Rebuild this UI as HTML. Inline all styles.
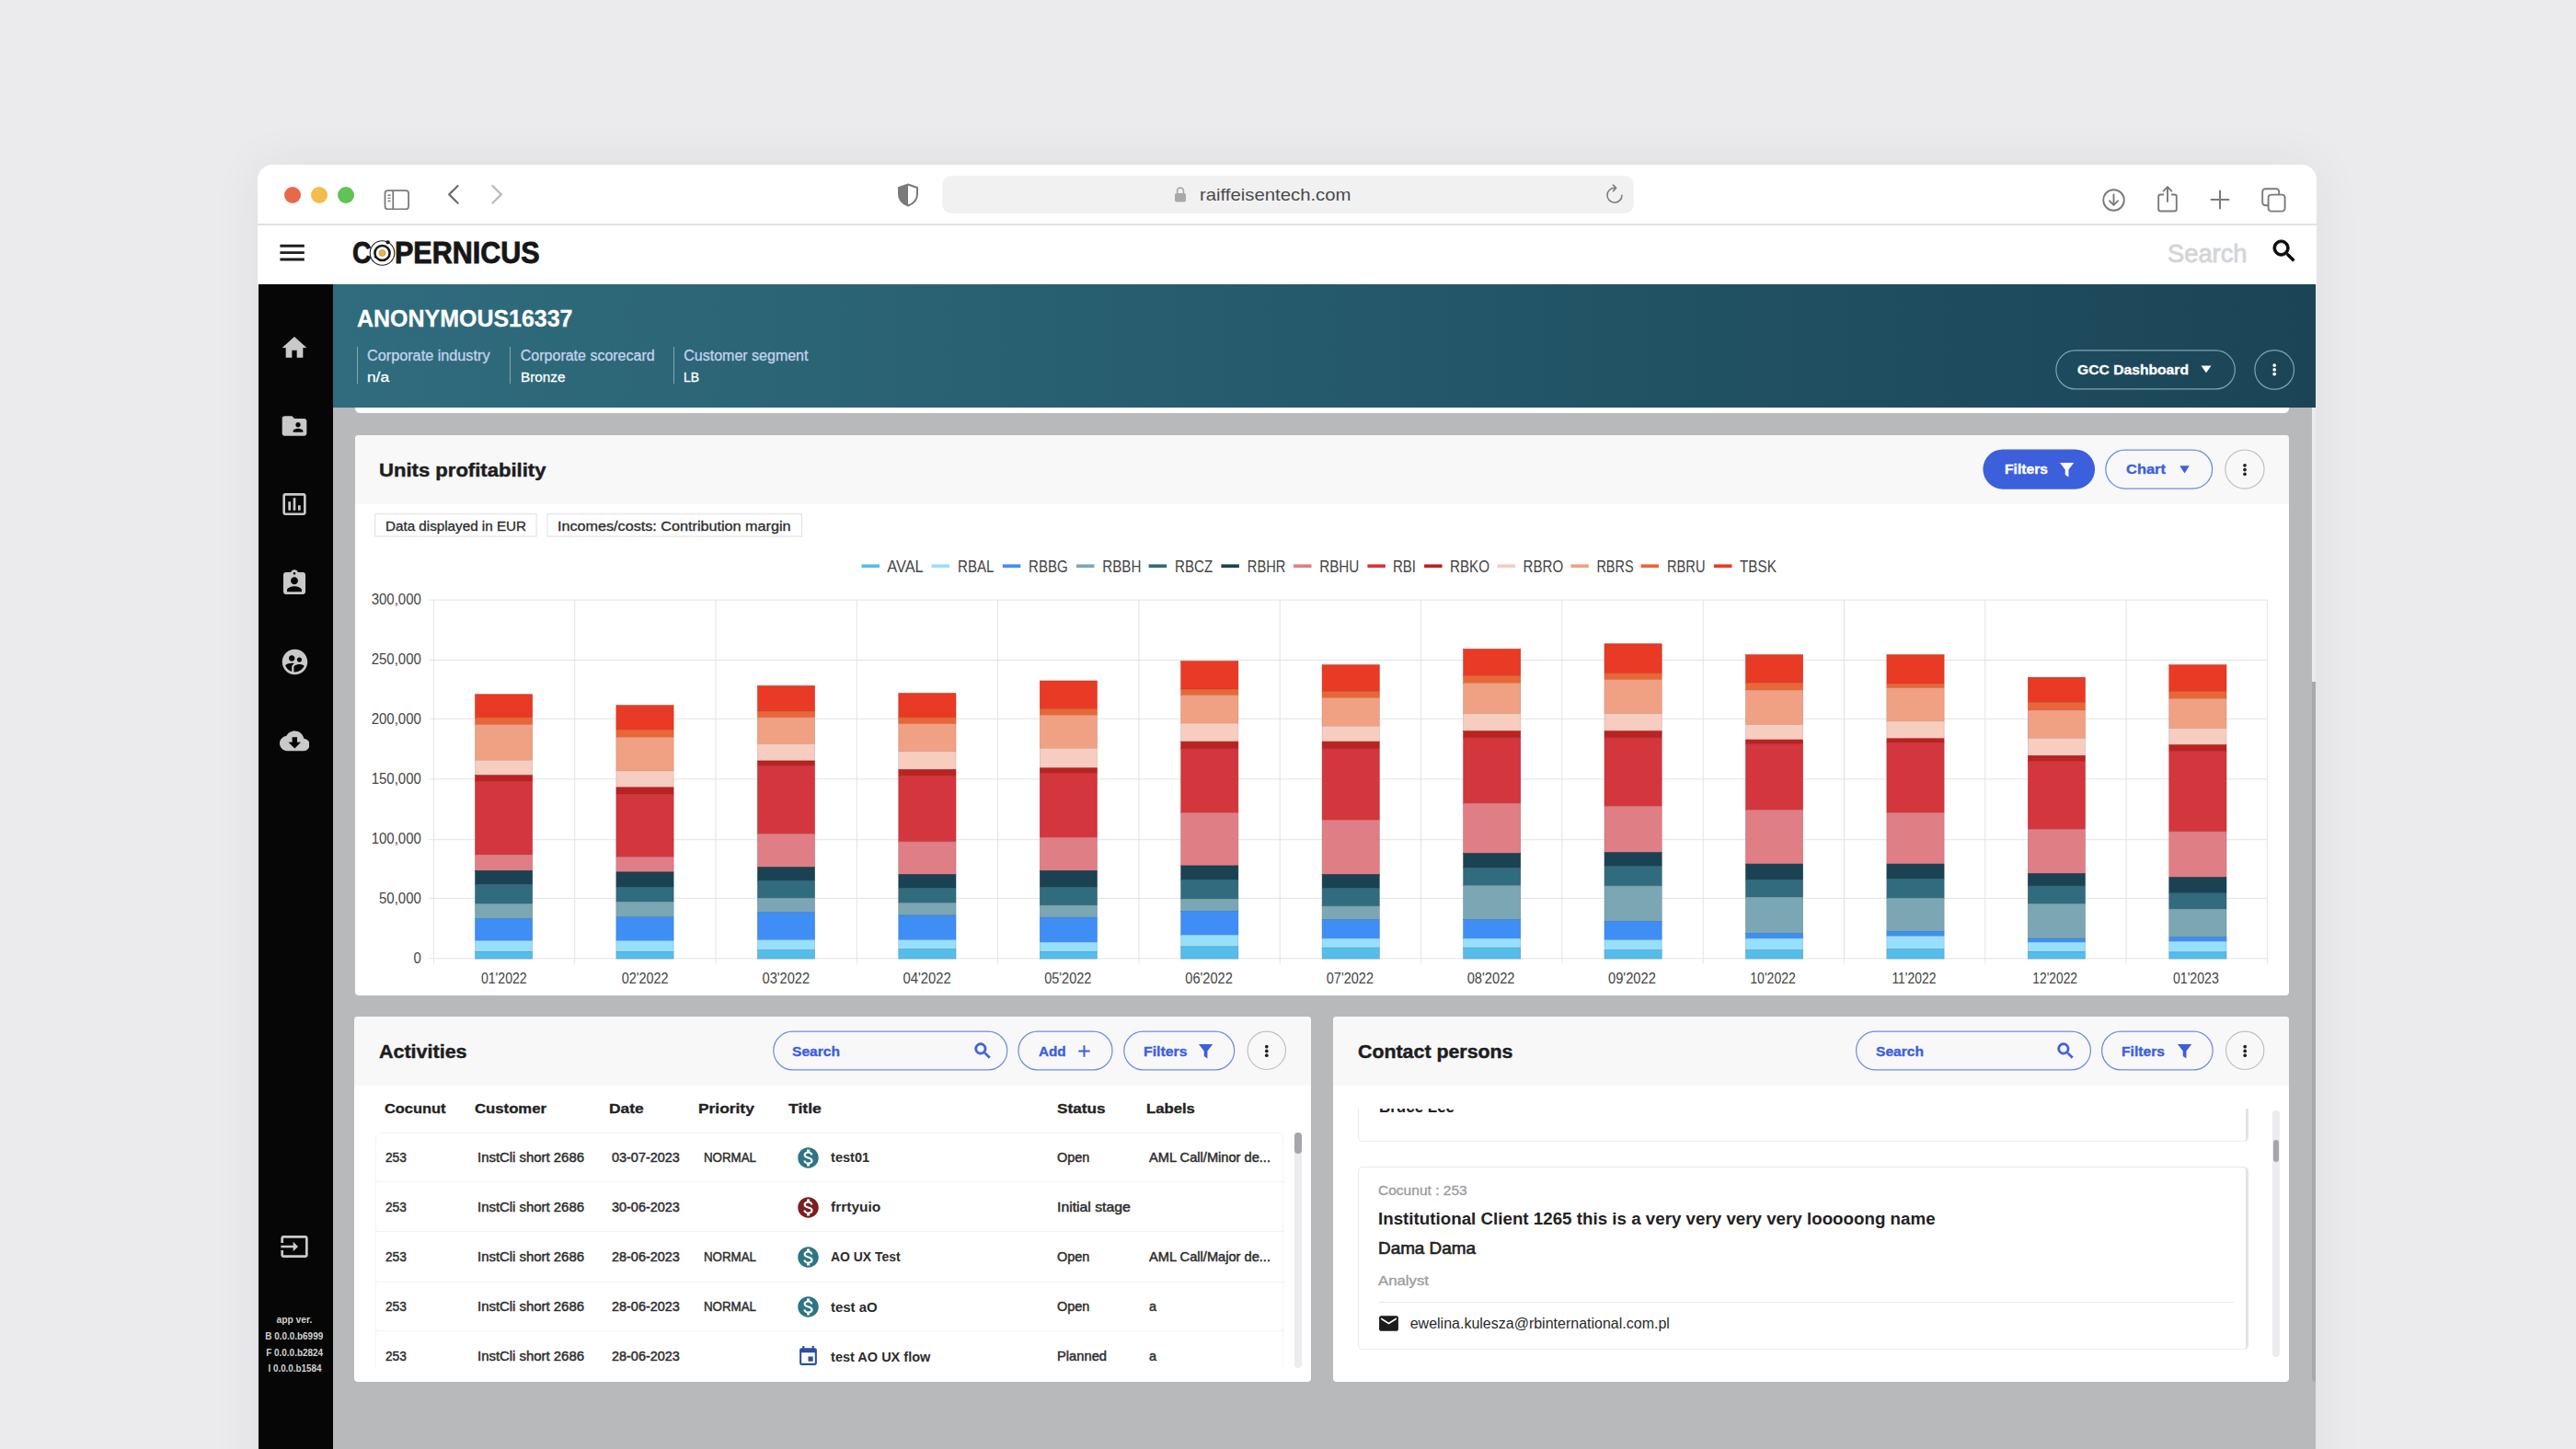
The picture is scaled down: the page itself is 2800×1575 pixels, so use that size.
<!DOCTYPE html>
<html lang="en"><head><meta charset="utf-8"><title>Copernicus</title>
<style>
html,body{margin:0;padding:0}
body{width:2800px;height:1575px;background:#ebebed;position:relative;overflow:hidden;font-family:"Liberation Sans",sans-serif}
.r{position:absolute;display:block}
.t{position:absolute;white-space:nowrap}
#clip{position:absolute;left:0;top:0;width:2800px;height:1575px;clip-path:inset(179px 282px 0 280px round 16px 16px 0 0)}
</style></head><body>
<div class="r" style="left:281px;top:179px;width:2236px;height:1476px;border-radius:16px 16px 0 0;box-shadow:0 0 55px rgba(50,50,85,.065)"></div>
<div class="r" style="left:280px;top:179px;width:2238px;height:130px;background:#fff;border-radius:16px 16px 0 0"></div>
<div id="clip">
<div class="r" style="left:280.0px;top:243.0px;width:2238.0px;height:2.0px;background:#e2e2e4;"></div>
<div class="r" style="left:309.0px;top:202.5px;width:18.0px;height:18.0px;background:#e8694a;border-radius:50%"></div>
<div class="r" style="left:338.0px;top:202.5px;width:18.0px;height:18.0px;background:#f3bd4b;border-radius:50%"></div>
<div class="r" style="left:367.3px;top:202.5px;width:18.0px;height:18.0px;background:#60c353;border-radius:50%"></div>
<svg class="r" style="left:417.0px;top:206.0px;" width="28.6" height="22.4" viewBox="0 0 31 25"><rect x="1.2" y="1.2" width="28.6" height="22.6" rx="3.5" fill="none" stroke="#7a7a7a" stroke-width="2"/><line x1="11" y1="1" x2="11" y2="24" stroke="#7a7a7a" stroke-width="2"/><line x1="4.5" y1="7" x2="8" y2="7" stroke="#7a7a7a" stroke-width="1.5"/><line x1="4.5" y1="10.5" x2="8" y2="10.5" stroke="#7a7a7a" stroke-width="1.5"/><line x1="4.5" y1="14" x2="8" y2="14" stroke="#7a7a7a" stroke-width="1.5"/></svg>
<svg class="r" style="left:485.0px;top:199.0px;" width="16.0" height="25.0" viewBox="0 0 16 25"><polyline points="12.6,3 3.2,12.4 12.6,21.8" fill="none" stroke="#6e6e6e" stroke-width="2.2" stroke-linecap="round" stroke-linejoin="round"/></svg>
<svg class="r" style="left:532.0px;top:199.0px;" width="16.0" height="25.0" viewBox="0 0 16 25"><polyline points="3.4,3 12.8,12.4 3.4,21.8" fill="none" stroke="#b9babd" stroke-width="2.2" stroke-linecap="round" stroke-linejoin="round"/></svg>
<svg class="r" style="left:975.0px;top:199.0px;" width="24.0" height="26.0" viewBox="0 0 24 26"><path d="M12 1.5 L22 5 V12 C22 18 17.5 22.5 12 24.5 C6.5 22.5 2 18 2 12 V5 Z" fill="none" stroke="#7a7a7a" stroke-width="2"/><path d="M12 1.5 L2 5 V12 C2 18 6.5 22.5 12 24.5 Z" fill="#7a7a7a"/></svg>
<div class="r" style="left:1024.0px;top:191.0px;width:752.0px;height:41.0px;background:#f1f1f2;border-radius:10px"></div>
<svg class="r" style="left:1276.0px;top:202.0px;" width="14.0" height="18.0" viewBox="0 0 14 18"><rect x="1" y="8" width="12" height="9.5" rx="1.8" fill="#a9a9ab"/><path d="M3.6 8.5V5.6a3.4 3.4 0 0 1 6.8 0v2.9" fill="none" stroke="#a9a9ab" stroke-width="1.7"/></svg>
<div class="t" style="left:1304.0px;transform-origin:0 50%;top:200.0px;font-size:19px;line-height:24.7px;font-weight:400;color:#4a4a4c;transform:scaleX(1.0693);">raiffeisentech.com</div>
<svg class="r" style="left:1744.0px;top:200.0px;" width="22.0" height="23.0" viewBox="0 0 22 23"><path d="M11.5 4.2 A8 8 0 1 0 19 12.2" fill="none" stroke="#7c7c7e" stroke-width="1.6" stroke-linecap="round"/><polyline points="9.3,1.2 12.6,4.2 9.6,7.6" fill="none" stroke="#7c7c7e" stroke-width="1.6" stroke-linecap="round" stroke-linejoin="round"/></svg>
<svg class="r" style="left:2285.0px;top:205.0px;" width="25.0" height="25.0" viewBox="0 0 25 25"><circle cx="12.5" cy="12.5" r="11.3" fill="none" stroke="#7a7a7a" stroke-width="1.9"/><line x1="12.5" y1="6.5" x2="12.5" y2="17.5" stroke="#7a7a7a" stroke-width="1.9" stroke-linecap="round"/><polyline points="8,13.3 12.5,17.8 17,13.3" fill="none" stroke="#7a7a7a" stroke-width="1.9" stroke-linecap="round" stroke-linejoin="round"/></svg>
<svg class="r" style="left:2344.0px;top:201.0px;" width="24.0" height="30.0" viewBox="0 0 24 30"><path d="M8 10.5H4.5a2.3 2.3 0 0 0-2.3 2.3v13.4a2.3 2.3 0 0 0 2.3 2.3h15a2.3 2.3 0 0 0 2.3-2.3V12.800a2.3 2.3 0 0 0-2.3-2.3H16" fill="none" stroke="#7a7a7a" stroke-width="1.9"/><line x1="12" y1="2.5" x2="12" y2="18" stroke="#7a7a7a" stroke-width="1.9" stroke-linecap="round"/><polyline points="7.6,6.6 12,2.2 16.4,6.6" fill="none" stroke="#7a7a7a" stroke-width="1.9" stroke-linecap="round" stroke-linejoin="round"/></svg>
<svg class="r" style="left:2402.0px;top:206.0px;" width="22.0" height="22.0" viewBox="0 0 22 22"><line x1="11" y1="1.5" x2="11" y2="20.5" stroke="#7a7a7a" stroke-width="2" stroke-linecap="round"/><line x1="1.5" y1="11" x2="20.5" y2="11" stroke="#7a7a7a" stroke-width="2" stroke-linecap="round"/></svg>
<svg class="r" style="left:2458.0px;top:204.0px;" width="27.0" height="27.0" viewBox="0 0 27 27"><rect x="1.2" y="1.2" width="18" height="18" rx="3.2" fill="#fff" stroke="#7a7a7a" stroke-width="1.9"/><rect x="7.6" y="7.6" width="18" height="18" rx="3.2" fill="#fff" stroke="#7a7a7a" stroke-width="1.9"/></svg>
<svg class="r" style="left:299.9px;top:257.4px;" width="35.2" height="35.2" viewBox="0 0 24 24"><path d="M3 18h18v-2H3v2zm0-5h18v-2H3v2zm0-7v2h18V6H3z" fill="#1e1e1e"/></svg>
<div class="t" style="left:382.5px;transform-origin:0 50%;top:253.2px;font-size:33.5px;line-height:43.55px;font-weight:700;color:#161616;transform:scaleX(0.8515);-webkit-text-stroke:0.9px #161616;">C</div>
<div class="t" style="left:428.6px;transform-origin:0 50%;top:253.2px;font-size:33.5px;line-height:43.55px;font-weight:700;color:#161616;transform:scaleX(0.9104);-webkit-text-stroke:0.9px #161616;">PERNICUS</div>
<svg class="r" style="left:400.0px;top:260.0px;" width="31.0" height="30.0" viewBox="0 0 31 30"><circle cx="15.5" cy="15" r="13.3" fill="none" stroke="#222" stroke-width="1.1"/><circle cx="15.5" cy="15" r="8.1" fill="none" stroke="#161616" stroke-width="2.5"/><circle cx="15.5" cy="15" r="3.6" fill="#f0b23a" stroke="#8a8a6a" stroke-width="0.5"/><circle cx="21.6" cy="3.3" r="2.1" fill="#161616"/><circle cx="8" cy="19.2" r="1.2" fill="#161616"/></svg>
<div class="t" style="left:2355.8px;transform-origin:0 50%;top:258.8px;font-size:27px;line-height:35.1px;font-weight:400;color:#d3d5d9;transform:scaleX(1.0111);-webkit-text-stroke:0.8px #d3d5d9;">Search</div>
<svg class="r" style="left:2466.7px;top:256.6px;" width="31.8" height="31.8" viewBox="0 0 24 24"><path d="M15.5 14h-.79l-.28-.27C15.41 12.59 16 11.11 16 9.5 16 5.91 13.09 3 9.5 3S3 5.91 3 9.5 5.91 16 9.5 16c1.61 0 3.09-.59 4.23-1.57l.27.28v.79l5 4.99L20.49 19l-4.99-5zm-6 0C7.01 14 5 11.99 5 9.5S7.01 5 9.5 5 14 7.01 14 9.5 11.99 14 9.5 14z" fill="#0b0b0b" stroke="#0b0b0b" stroke-width="0.7"/></svg>
<div class="r" style="left:281.0px;top:308.5px;width:81.0px;height:1300.0px;background:#060606;"></div>
<svg class="r" style="left:303.7px;top:362.2px;" width="32.0" height="32.0" viewBox="0 0 24 24"><path d="M10 20v-6h4v6h5v-8h3L12 3 2 12h3v8z" fill="#c9c9c9"/></svg>
<svg class="r" style="left:303.7px;top:446.5px;" width="32.0" height="32.0" viewBox="0 0 24 24"><path d="M20 6h-8l-2-2H4c-1.1 0-1.99.9-1.99 2L2 18c0 1.1.9 2 2 2h16c1.1 0 2-.9 2-2V8c0-1.1-.9-2-2-2zm-5 3c1.1 0 2 .9 2 2s-.9 2-2 2-2-.9-2-2 .9-2 2-2zm4 8h-8v-1c0-1.33 2.67-2 4-2s4 .67 4 2v1z" fill="#c9c9c9"/></svg>
<svg class="r" style="left:303.7px;top:532.0px;" width="32.0" height="32.0" viewBox="0 0 24 24"><path d="M9 17H7v-7h2v7zm4 0h-2V7h2v10zm4 0h-2v-4h2v4zm2.5 2.1h-15V5h15v14.1zm0-16.1h-15c-1.1 0-2 .9-2 2v14c0 1.1.9 2 2 2h15c1.1 0 2-.9 2-2V5c0-1.1-.9-2-2-2z" fill="#c9c9c9"/></svg>
<svg class="r" style="left:303.7px;top:618.0px;" width="32.0" height="32.0" viewBox="0 0 24 24"><path d="M19 3h-4.18C14.4 1.84 13.3 1 12 1c-1.3 0-2.4.84-2.82 2H5c-1.1 0-2 .9-2 2v14c0 1.1.9 2 2 2h14c1.1 0 2-.9 2-2V5c0-1.1-.9-2-2-2zm-7 0c.55 0 1 .45 1 1s-.45 1-1 1-1-.45-1-1 .45-1 1-1zm0 4c1.66 0 3 1.34 3 3s-1.34 3-3 3-3-1.34-3-3 1.34-3 3-3zm6 12H6v-1.4c0-2 4-3.1 6-3.1s6 1.1 6 3.1V19z" fill="#c9c9c9"/></svg>
<svg class="r" style="left:303.5px;top:702.5px;" width="33.0" height="33.0" viewBox="0 0 24 24"><path d="M11.99 2c-5.52 0-10 4.48-10 10s4.48 10 10 10 10-4.48 10-10-4.48-10-10-10zm3.61 6.34c1.07 0 1.93.86 1.93 1.93 0 1.07-.86 1.93-1.93 1.93-1.07 0-1.93-.86-1.93-1.93-.01-1.07.86-1.93 1.93-1.93zm-6-1.58c1.3 0 2.36 1.06 2.36 2.36 0 1.3-1.06 2.36-2.36 2.36s-2.36-1.06-2.36-2.36c0-1.31 1.05-2.36 2.36-2.36zm0 9.13v3.75c-2.4-.75-4.3-2.6-5.14-4.96 1.05-1.12 3.67-1.69 5.14-1.69.53 0 1.2.08 1.9.22-1.64.87-1.9 2.02-1.9 2.68zM11.99 20c-.27 0-.53-.01-.79-.04v-4.07c0-1.42 2.94-2.13 4.4-2.13 1.07 0 2.92.39 3.84 1.15-1.17 2.97-4.06 5.09-7.45 5.09z" fill="#c9c9c9"/></svg>
<svg class="r" style="left:303.7px;top:788.9px;" width="32.6" height="32.6" viewBox="0 0 24 24"><path d="M19.35 10.04C18.67 6.59 15.64 4 12 4 9.11 4 6.6 5.64 5.35 8.04 2.34 8.36 0 10.91 0 14c0 3.31 2.69 6 6 6h13c2.76 0 5-2.24 5-5 0-2.64-2.05-4.78-4.65-4.96zM17 13l-5 5-5-5h3V9h4v4h3z" fill="#c9c9c9"/></svg>
<svg class="r" style="left:304.0px;top:1338.5px;" width="32.0" height="32.0" viewBox="0 0 24 24"><path d="M21 3.01H3c-1.1 0-2 .9-2 2V9h2V4.99h18v14.03H3V15H1v4.01c0 1.1.9 1.98 2 1.98h18c1.1 0 2-.88 2-1.98v-14c0-1.11-.9-2-2-2zM11 16l4-4-4-4v3H1v2h10v3z" fill="#c9c9c9"/></svg>
<div class="t" style="left:301.1px;transform-origin:50% 50%;top:1427.7px;font-size:10px;line-height:13.0px;font-weight:700;color:#d0d0d0;transform:scaleX(1.0318);">app ver.</div>
<div class="t" style="left:288.3px;transform-origin:50% 50%;top:1445.6px;font-size:10px;line-height:13.0px;font-weight:700;color:#d0d0d0;transform:scaleX(0.9941);">B 0.0.0.b6999</div>
<div class="t" style="left:288.9px;transform-origin:50% 50%;top:1463.5px;font-size:10px;line-height:13.0px;font-weight:700;color:#d0d0d0;transform:scaleX(0.9958);">F 0.0.0.b2824</div>
<div class="t" style="left:290.5px;transform-origin:50% 50%;top:1481.4px;font-size:10px;line-height:13.0px;font-weight:700;color:#d0d0d0;transform:scaleX(0.9842);">I 0.0.0.b1584</div>
<div class="r" style="left:362.0px;top:308.5px;width:2155.0px;height:1300.0px;background:#b8b9bb;"></div>
<div class="r" style="left:2512.6px;top:443.0px;width:4.4px;height:298.0px;background:#ececef;"></div>
<div class="r" style="left:2512.6px;top:741.0px;width:4.4px;height:761.0px;background:#a9a9ab;border-radius:0 0 0 4px"></div>
<div class="r" style="left:385.5px;top:436.0px;width:2102.5px;height:13.0px;background:#fff;border-radius:0 0 5px 5px"></div>
<div class="r" style="left:362.0px;top:308.5px;width:2155.0px;height:134.5px;background:linear-gradient(90deg,#2f6c7d 0%,#2a6273 30%,#225567 60%,#1b4557 100%);"></div>
<div class="t" style="left:388.3px;transform-origin:0 50%;top:330.1px;font-size:26px;line-height:33.8px;font-weight:700;color:#fff;transform:scaleX(0.9603);-webkit-text-stroke:0.3px #fff;">ANONYMOUS16337</div>
<div class="r" style="left:388.0px;top:377.0px;width:1.0px;height:39.5px;background:rgba(255,255,255,.42);"></div>
<div class="t" style="left:399.3px;transform-origin:0 50%;top:376.6px;font-size:16px;line-height:20.8px;font-weight:400;color:#c5d2ee;transform:scaleX(1.0143);-webkit-text-stroke:0.3px #c5d2ee;">Corporate industry</div>
<div class="t" style="left:399.3px;transform-origin:0 50%;top:400.2px;font-size:15.5px;line-height:20.15px;font-weight:400;color:#fff;transform:scaleX(1.1138);-webkit-text-stroke:0.3px #fff;">n/a</div>
<div class="r" style="left:554.0px;top:377.0px;width:1.0px;height:39.5px;background:rgba(255,255,255,.42);"></div>
<div class="t" style="left:565.8px;transform-origin:0 50%;top:376.6px;font-size:16px;line-height:20.8px;font-weight:400;color:#c5d2ee;-webkit-text-stroke:0.3px #c5d2ee;">Corporate scorecard</div>
<div class="t" style="left:565.8px;transform-origin:0 50%;top:400.2px;font-size:15.5px;line-height:20.15px;font-weight:400;color:#fff;transform:scaleX(0.9875);-webkit-text-stroke:0.3px #fff;">Bronze</div>
<div class="r" style="left:732.0px;top:377.0px;width:1.0px;height:39.5px;background:rgba(255,255,255,.42);"></div>
<div class="t" style="left:743.3px;transform-origin:0 50%;top:376.6px;font-size:16px;line-height:20.8px;font-weight:400;color:#c5d2ee;-webkit-text-stroke:0.3px #c5d2ee;">Customer segment</div>
<div class="t" style="left:743.3px;transform-origin:0 50%;top:400.2px;font-size:15.5px;line-height:20.15px;font-weight:400;color:#fff;transform:scaleX(0.8966);-webkit-text-stroke:0.3px #fff;">LB</div>
<svg class="r" style="left:2232px;top:378px" width="202" height="50" viewBox="0 0 202 50"><rect x="2.90" y="2.90" width="194.40" height="42.00" rx="21.00" fill="none" stroke="rgba(200,232,244,.58)" stroke-width="1.2"/></svg>
<div class="t" style="left:2257.5px;transform-origin:0 50%;top:392.4px;font-size:15.3px;line-height:19.89px;font-weight:700;color:#fff;transform:scaleX(1.0240);-webkit-text-stroke:0.3px #fff;">GCC Dashboard</div>
<svg class="r" style="left:2392.4px;top:396.8px;" width="12.0" height="9.2" viewBox="0 0 13 10"><path d="M0.5 0.5h12L6.5 9z" fill="#fff"/></svg>
<svg class="r" style="left:2448px;top:378px" width="50" height="50" viewBox="0 0 50 50"><rect x="2.90" y="2.60" width="42.60" height="42.60" rx="21.30" fill="none" stroke="rgba(200,232,244,.58)" stroke-width="1.2"/></svg>
<svg class="r" style="left:2468px;top:391px" width="8" height="20" viewBox="0 0 8 20"><circle cx="4.20" cy="6.05" r="1.85" fill="#fff"/><circle cx="4.20" cy="10.80" r="1.85" fill="#fff"/><circle cx="4.20" cy="15.55" r="1.85" fill="#fff"/></svg>
<div class="r" style="left:385.5px;top:473.0px;width:2102.5px;height:609.3px;background:#fff;border-radius:4px"></div>
<div class="r" style="left:385.5px;top:473.0px;width:2102.5px;height:74.5px;background:#f8f8f8;border-radius:4px 4px 0 0"></div>
<div class="t" style="left:412.3px;transform-origin:0 50%;top:498.0px;font-size:20.7px;line-height:26.91px;font-weight:700;color:#1d1d1f;transform:scaleX(1.0670);-webkit-text-stroke:0.45px #1d1d1f;">Units profitability</div>
<svg class="r" style="left:2153px;top:486px" width="128" height="50" viewBox="0 0 128 50"><rect x="2.41" y="2.40" width="121.69" height="43.29" rx="21.64" fill="#3c5fdc" stroke="#3c5fdc" stroke-width="0.01"/></svg>
<div class="t" style="left:2178.5px;transform-origin:0 50%;top:500.2px;font-size:15.4px;line-height:20.02px;font-weight:700;color:#fff;transform:scaleX(1.0170);-webkit-text-stroke:0.35px #fff;">Filters</div>
<svg class="r" style="left:2236.8px;top:500.8px;" width="19.2" height="19.2" viewBox="0 0 24 24"><path d="M2.5 2.5h19l-7.2 9.3V22l-4.6-3.2v-7z" fill="#fff"/></svg>
<svg class="r" style="left:2286px;top:486px" width="124" height="50" viewBox="0 0 124 50"><rect x="2.85" y="3.05" width="115.80" height="42.00" rx="21.00" fill="none" stroke="#6f8ce6" stroke-width="1.3"/></svg>
<div class="t" style="left:2310.7px;transform-origin:0 50%;top:500.2px;font-size:15.4px;line-height:20.02px;font-weight:700;color:#3c5fdc;transform:scaleX(1.0692);-webkit-text-stroke:0.35px #3c5fdc;">Chart</div>
<svg class="r" style="left:2368.5px;top:505.5px;" width="11.0" height="9.0" viewBox="0 0 11 9"><path d="M0.3 0.3h10.4L5.5 8.5z" fill="#3c5fdc"/></svg>
<svg class="r" style="left:2416px;top:486px" width="50" height="50" viewBox="0 0 50 50"><rect x="2.85" y="2.95" width="42.20" height="42.20" rx="21.10" fill="none" stroke="#bcbcc0" stroke-width="1.1"/></svg>
<svg class="r" style="left:2436px;top:500px" width="8" height="20" viewBox="0 0 8 20"><circle cx="4.00" cy="5.85" r="1.85" fill="#222"/><circle cx="4.00" cy="10.60" r="1.85" fill="#222"/><circle cx="4.00" cy="15.35" r="1.85" fill="#222"/></svg>
<svg class="r" style="left:405px;top:556px" width="183" height="32" viewBox="0 0 183 32"><rect x="2.70" y="2.70" width="175.40" height="24.30" rx="0.00" fill="#fff" stroke="#dfdfe2" stroke-width="1"/></svg>
<div class="t" style="left:419.0px;transform-origin:0 50%;top:561.6px;font-size:15px;line-height:19.5px;font-weight:400;color:#2b2b2b;transform:scaleX(1.0138);-webkit-text-stroke:0.3px #2b2b2b;">Data displayed in EUR</div>
<svg class="r" style="left:592px;top:556px" width="284" height="32" viewBox="0 0 284 32"><rect x="2.90" y="2.70" width="276.50" height="24.30" rx="0.00" fill="#fff" stroke="#dfdfe2" stroke-width="1"/></svg>
<div class="t" style="left:606.0px;transform-origin:0 50%;top:561.6px;font-size:15px;line-height:19.5px;font-weight:400;color:#2b2b2b;transform:scaleX(1.0782);-webkit-text-stroke:0.3px #2b2b2b;">Incomes/costs: Contribution margin</div>
<svg class="r" style="left:0;top:0" width="2800" height="1575" viewBox="0 0 2800 1575" font-family="Liberation Sans, sans-serif"><line x1="465.9" y1="1041.8" x2="2464.4" y2="1041.8" stroke="#e3e3e5" stroke-width="1"/><text x="457.9" y="1047.1" text-anchor="end" font-size="16.5" fill="#454545" textLength="8.3" lengthAdjust="spacingAndGlyphs">0</text><line x1="465.9" y1="976.4" x2="2464.4" y2="976.4" stroke="#e3e3e5" stroke-width="1"/><text x="457.9" y="982.1" text-anchor="end" font-size="16.5" fill="#454545" textLength="45.9" lengthAdjust="spacingAndGlyphs">50,000</text><line x1="465.9" y1="912.7" x2="2464.4" y2="912.7" stroke="#e3e3e5" stroke-width="1"/><text x="457.9" y="917.1" text-anchor="end" font-size="16.5" fill="#454545" textLength="54.2" lengthAdjust="spacingAndGlyphs">100,000</text><line x1="465.9" y1="846.8" x2="2464.4" y2="846.8" stroke="#e3e3e5" stroke-width="1"/><text x="457.9" y="852.1" text-anchor="end" font-size="16.5" fill="#454545" textLength="54.2" lengthAdjust="spacingAndGlyphs">150,000</text><line x1="465.9" y1="781.3" x2="2464.4" y2="781.3" stroke="#e3e3e5" stroke-width="1"/><text x="457.9" y="787.0" text-anchor="end" font-size="16.5" fill="#454545" textLength="54.2" lengthAdjust="spacingAndGlyphs">200,000</text><line x1="465.9" y1="717.5" x2="2464.4" y2="717.5" stroke="#e3e3e5" stroke-width="1"/><text x="457.9" y="722.0" text-anchor="end" font-size="16.5" fill="#454545" textLength="54.2" lengthAdjust="spacingAndGlyphs">250,000</text><line x1="465.9" y1="652.1" x2="2464.4" y2="652.1" stroke="#e3e3e5" stroke-width="1"/><text x="457.9" y="657.0" text-anchor="end" font-size="16.5" fill="#454545" textLength="54.2" lengthAdjust="spacingAndGlyphs">300,000</text><line x1="471.4" y1="652.1" x2="471.4" y2="1047.3" stroke="#e3e3e5" stroke-width="1"/><line x1="624.7" y1="652.1" x2="624.7" y2="1047.3" stroke="#e3e3e5" stroke-width="1"/><line x1="778.0" y1="652.1" x2="778.0" y2="1047.3" stroke="#e3e3e5" stroke-width="1"/><line x1="931.3" y1="652.1" x2="931.3" y2="1047.3" stroke="#e3e3e5" stroke-width="1"/><line x1="1084.6" y1="652.1" x2="1084.6" y2="1047.3" stroke="#e3e3e5" stroke-width="1"/><line x1="1237.9" y1="652.1" x2="1237.9" y2="1047.3" stroke="#e3e3e5" stroke-width="1"/><line x1="1391.2" y1="652.1" x2="1391.2" y2="1047.3" stroke="#e3e3e5" stroke-width="1"/><line x1="1544.6" y1="652.1" x2="1544.6" y2="1047.3" stroke="#e3e3e5" stroke-width="1"/><line x1="1697.9" y1="652.1" x2="1697.9" y2="1047.3" stroke="#e3e3e5" stroke-width="1"/><line x1="1851.2" y1="652.1" x2="1851.2" y2="1047.3" stroke="#e3e3e5" stroke-width="1"/><line x1="2004.5" y1="652.1" x2="2004.5" y2="1047.3" stroke="#e3e3e5" stroke-width="1"/><line x1="2157.8" y1="652.1" x2="2157.8" y2="1047.3" stroke="#e3e3e5" stroke-width="1"/><line x1="2311.1" y1="652.1" x2="2311.1" y2="1047.3" stroke="#e3e3e5" stroke-width="1"/><line x1="2464.4" y1="652.1" x2="2464.4" y2="1047.3" stroke="#e3e3e5" stroke-width="1"/><rect x="516.5" y="754.75" width="62.2" height="25.12" fill="#e83a25" stroke="#be2f1e" stroke-width="0.5"/><rect x="516.5" y="779.87" width="62.2" height="7.85" fill="#ea6638" stroke="#bf532d" stroke-width="0.5"/><rect x="516.5" y="787.72" width="62.2" height="38.63" fill="#f0a183" stroke="#c4846b" stroke-width="0.5"/><rect x="516.5" y="826.35" width="62.2" height="16.33" fill="#f7cdbf" stroke="#caa89c" stroke-width="0.5"/><rect x="516.5" y="842.68" width="62.2" height="6.28" fill="#bb2222" stroke="#991b1b" stroke-width="0.5"/><rect x="516.5" y="848.96" width="62.2" height="80.08" fill="#d3363d" stroke="#ad2c32" stroke-width="0.5"/><rect x="516.5" y="929.04" width="62.2" height="17.27" fill="#e07e86" stroke="#b7676d" stroke-width="0.5"/><rect x="516.5" y="946.31" width="62.2" height="15.07" fill="#1a4252" stroke="#153643" stroke-width="0.5"/><rect x="516.5" y="961.39" width="62.2" height="21.04" fill="#306c7d" stroke="#275866" stroke-width="0.5"/><rect x="516.5" y="982.43" width="62.2" height="16.33" fill="#7aa7b3" stroke="#648892" stroke-width="0.5"/><rect x="516.5" y="998.76" width="62.2" height="23.87" fill="#3f8ef5" stroke="#3374c8" stroke-width="0.5"/><rect x="516.5" y="1022.62" width="62.2" height="11.62" fill="#97dffb" stroke="#7bb6cd" stroke-width="0.5"/><rect x="516.5" y="1034.24" width="62.2" height="7.85" fill="#56bcea" stroke="#469abf" stroke-width="0.5"/><text x="547.8" y="1068.7" text-anchor="middle" font-size="15.6" fill="#454545" textLength="49.7" lengthAdjust="spacingAndGlyphs">01'2022</text><rect x="669.9" y="766.68" width="62.2" height="26.38" fill="#e83a25" stroke="#be2f1e" stroke-width="0.5"/><rect x="669.9" y="793.06" width="62.2" height="8.17" fill="#ea6638" stroke="#bf532d" stroke-width="0.5"/><rect x="669.9" y="801.22" width="62.2" height="36.74" fill="#f0a183" stroke="#c4846b" stroke-width="0.5"/><rect x="669.9" y="837.97" width="62.2" height="17.90" fill="#f7cdbf" stroke="#caa89c" stroke-width="0.5"/><rect x="669.9" y="855.87" width="62.2" height="7.22" fill="#bb2222" stroke="#991b1b" stroke-width="0.5"/><rect x="669.9" y="863.09" width="62.2" height="68.46" fill="#d3363d" stroke="#ad2c32" stroke-width="0.5"/><rect x="669.9" y="931.55" width="62.2" height="16.33" fill="#e07e86" stroke="#b7676d" stroke-width="0.5"/><rect x="669.9" y="947.88" width="62.2" height="16.33" fill="#1a4252" stroke="#153643" stroke-width="0.5"/><rect x="669.9" y="964.21" width="62.2" height="16.02" fill="#306c7d" stroke="#275866" stroke-width="0.5"/><rect x="669.9" y="980.23" width="62.2" height="16.64" fill="#7aa7b3" stroke="#648892" stroke-width="0.5"/><rect x="669.9" y="996.87" width="62.2" height="25.75" fill="#3f8ef5" stroke="#3374c8" stroke-width="0.5"/><rect x="669.9" y="1022.62" width="62.2" height="11.62" fill="#97dffb" stroke="#7bb6cd" stroke-width="0.5"/><rect x="669.9" y="1034.24" width="62.2" height="7.85" fill="#56bcea" stroke="#469abf" stroke-width="0.5"/><text x="701.1" y="1068.7" text-anchor="middle" font-size="15.6" fill="#454545" textLength="50.8" lengthAdjust="spacingAndGlyphs">02'2022</text><rect x="823.4" y="745.33" width="62.2" height="27.64" fill="#e83a25" stroke="#be2f1e" stroke-width="0.5"/><rect x="823.4" y="772.96" width="62.2" height="6.91" fill="#ea6638" stroke="#bf532d" stroke-width="0.5"/><rect x="823.4" y="779.87" width="62.2" height="28.89" fill="#f0a183" stroke="#c4846b" stroke-width="0.5"/><rect x="823.4" y="808.76" width="62.2" height="18.21" fill="#f7cdbf" stroke="#caa89c" stroke-width="0.5"/><rect x="823.4" y="826.98" width="62.2" height="5.34" fill="#bb2222" stroke="#991b1b" stroke-width="0.5"/><rect x="823.4" y="832.32" width="62.2" height="74.11" fill="#d3363d" stroke="#ad2c32" stroke-width="0.5"/><rect x="823.4" y="906.43" width="62.2" height="36.11" fill="#e07e86" stroke="#b7676d" stroke-width="0.5"/><rect x="823.4" y="942.54" width="62.2" height="14.76" fill="#1a4252" stroke="#153643" stroke-width="0.5"/><rect x="823.4" y="957.30" width="62.2" height="18.84" fill="#306c7d" stroke="#275866" stroke-width="0.5"/><rect x="823.4" y="976.15" width="62.2" height="15.70" fill="#7aa7b3" stroke="#648892" stroke-width="0.5"/><rect x="823.4" y="991.85" width="62.2" height="29.83" fill="#3f8ef5" stroke="#3374c8" stroke-width="0.5"/><rect x="823.4" y="1021.68" width="62.2" height="10.99" fill="#97dffb" stroke="#7bb6cd" stroke-width="0.5"/><rect x="823.4" y="1032.67" width="62.2" height="9.42" fill="#56bcea" stroke="#469abf" stroke-width="0.5"/><text x="854.3" y="1068.7" text-anchor="middle" font-size="15.6" fill="#454545" textLength="51.6" lengthAdjust="spacingAndGlyphs">03'2022</text><rect x="976.8" y="753.49" width="62.2" height="26.38" fill="#e83a25" stroke="#be2f1e" stroke-width="0.5"/><rect x="976.8" y="779.87" width="62.2" height="6.91" fill="#ea6638" stroke="#bf532d" stroke-width="0.5"/><rect x="976.8" y="786.78" width="62.2" height="30.15" fill="#f0a183" stroke="#c4846b" stroke-width="0.5"/><rect x="976.8" y="816.93" width="62.2" height="19.47" fill="#f7cdbf" stroke="#caa89c" stroke-width="0.5"/><rect x="976.8" y="836.40" width="62.2" height="6.91" fill="#bb2222" stroke="#991b1b" stroke-width="0.5"/><rect x="976.8" y="843.31" width="62.2" height="71.60" fill="#d3363d" stroke="#ad2c32" stroke-width="0.5"/><rect x="976.8" y="914.91" width="62.2" height="35.49" fill="#e07e86" stroke="#b7676d" stroke-width="0.5"/><rect x="976.8" y="950.39" width="62.2" height="15.07" fill="#1a4252" stroke="#153643" stroke-width="0.5"/><rect x="976.8" y="965.47" width="62.2" height="16.02" fill="#306c7d" stroke="#275866" stroke-width="0.5"/><rect x="976.8" y="981.49" width="62.2" height="13.50" fill="#7aa7b3" stroke="#648892" stroke-width="0.5"/><rect x="976.8" y="994.99" width="62.2" height="26.69" fill="#3f8ef5" stroke="#3374c8" stroke-width="0.5"/><rect x="976.8" y="1021.68" width="62.2" height="10.05" fill="#97dffb" stroke="#7bb6cd" stroke-width="0.5"/><rect x="976.8" y="1031.73" width="62.2" height="10.36" fill="#56bcea" stroke="#469abf" stroke-width="0.5"/><text x="1007.6" y="1068.7" text-anchor="middle" font-size="15.6" fill="#454545" textLength="52.4" lengthAdjust="spacingAndGlyphs">04'2022</text><rect x="1130.3" y="739.99" width="62.2" height="30.46" fill="#e83a25" stroke="#be2f1e" stroke-width="0.5"/><rect x="1130.3" y="770.45" width="62.2" height="6.91" fill="#ea6638" stroke="#bf532d" stroke-width="0.5"/><rect x="1130.3" y="777.36" width="62.2" height="36.11" fill="#f0a183" stroke="#c4846b" stroke-width="0.5"/><rect x="1130.3" y="813.47" width="62.2" height="21.35" fill="#f7cdbf" stroke="#caa89c" stroke-width="0.5"/><rect x="1130.3" y="834.83" width="62.2" height="5.65" fill="#bb2222" stroke="#991b1b" stroke-width="0.5"/><rect x="1130.3" y="840.48" width="62.2" height="69.72" fill="#d3363d" stroke="#ad2c32" stroke-width="0.5"/><rect x="1130.3" y="910.20" width="62.2" height="36.11" fill="#e07e86" stroke="#b7676d" stroke-width="0.5"/><rect x="1130.3" y="946.31" width="62.2" height="17.90" fill="#1a4252" stroke="#153643" stroke-width="0.5"/><rect x="1130.3" y="964.21" width="62.2" height="19.78" fill="#306c7d" stroke="#275866" stroke-width="0.5"/><rect x="1130.3" y="984.00" width="62.2" height="13.19" fill="#7aa7b3" stroke="#648892" stroke-width="0.5"/><rect x="1130.3" y="997.19" width="62.2" height="27.01" fill="#3f8ef5" stroke="#3374c8" stroke-width="0.5"/><rect x="1130.3" y="1024.19" width="62.2" height="10.05" fill="#97dffb" stroke="#7bb6cd" stroke-width="0.5"/><rect x="1130.3" y="1034.24" width="62.2" height="7.85" fill="#56bcea" stroke="#469abf" stroke-width="0.5"/><text x="1160.8" y="1068.7" text-anchor="middle" font-size="15.6" fill="#454545" textLength="51.2" lengthAdjust="spacingAndGlyphs">05'2022</text><rect x="1283.7" y="718.63" width="62.2" height="30.46" fill="#e83a25" stroke="#be2f1e" stroke-width="0.5"/><rect x="1283.7" y="749.09" width="62.2" height="6.59" fill="#ea6638" stroke="#bf532d" stroke-width="0.5"/><rect x="1283.7" y="755.69" width="62.2" height="30.46" fill="#f0a183" stroke="#c4846b" stroke-width="0.5"/><rect x="1283.7" y="786.15" width="62.2" height="19.94" fill="#f7cdbf" stroke="#caa89c" stroke-width="0.5"/><rect x="1283.7" y="806.09" width="62.2" height="7.69" fill="#bb2222" stroke="#991b1b" stroke-width="0.5"/><rect x="1283.7" y="813.79" width="62.2" height="69.72" fill="#d3363d" stroke="#ad2c32" stroke-width="0.5"/><rect x="1283.7" y="883.50" width="62.2" height="57.47" fill="#e07e86" stroke="#b7676d" stroke-width="0.5"/><rect x="1283.7" y="940.97" width="62.2" height="15.39" fill="#1a4252" stroke="#153643" stroke-width="0.5"/><rect x="1283.7" y="956.36" width="62.2" height="20.73" fill="#306c7d" stroke="#275866" stroke-width="0.5"/><rect x="1283.7" y="977.09" width="62.2" height="13.19" fill="#7aa7b3" stroke="#648892" stroke-width="0.5"/><rect x="1283.7" y="990.28" width="62.2" height="26.07" fill="#3f8ef5" stroke="#3374c8" stroke-width="0.5"/><rect x="1283.7" y="1016.34" width="62.2" height="12.56" fill="#97dffb" stroke="#7bb6cd" stroke-width="0.5"/><rect x="1283.7" y="1028.91" width="62.2" height="13.19" fill="#56bcea" stroke="#469abf" stroke-width="0.5"/><text x="1314.1" y="1068.7" text-anchor="middle" font-size="15.6" fill="#454545" textLength="51.5" lengthAdjust="spacingAndGlyphs">06'2022</text><rect x="1437.1" y="722.71" width="62.2" height="28.89" fill="#e83a25" stroke="#be2f1e" stroke-width="0.5"/><rect x="1437.1" y="751.61" width="62.2" height="6.91" fill="#ea6638" stroke="#bf532d" stroke-width="0.5"/><rect x="1437.1" y="758.52" width="62.2" height="30.78" fill="#f0a183" stroke="#c4846b" stroke-width="0.5"/><rect x="1437.1" y="789.29" width="62.2" height="16.80" fill="#f7cdbf" stroke="#caa89c" stroke-width="0.5"/><rect x="1437.1" y="806.09" width="62.2" height="7.69" fill="#bb2222" stroke="#991b1b" stroke-width="0.5"/><rect x="1437.1" y="813.79" width="62.2" height="77.57" fill="#d3363d" stroke="#ad2c32" stroke-width="0.5"/><rect x="1437.1" y="891.36" width="62.2" height="59.04" fill="#e07e86" stroke="#b7676d" stroke-width="0.5"/><rect x="1437.1" y="950.39" width="62.2" height="15.07" fill="#1a4252" stroke="#153643" stroke-width="0.5"/><rect x="1437.1" y="965.47" width="62.2" height="19.47" fill="#306c7d" stroke="#275866" stroke-width="0.5"/><rect x="1437.1" y="984.94" width="62.2" height="14.76" fill="#7aa7b3" stroke="#648892" stroke-width="0.5"/><rect x="1437.1" y="999.70" width="62.2" height="20.41" fill="#3f8ef5" stroke="#3374c8" stroke-width="0.5"/><rect x="1437.1" y="1020.11" width="62.2" height="10.05" fill="#97dffb" stroke="#7bb6cd" stroke-width="0.5"/><rect x="1437.1" y="1030.16" width="62.2" height="11.93" fill="#56bcea" stroke="#469abf" stroke-width="0.5"/><text x="1467.4" y="1068.7" text-anchor="middle" font-size="15.6" fill="#454545" textLength="51.2" lengthAdjust="spacingAndGlyphs">07'2022</text><rect x="1590.6" y="705.44" width="62.2" height="29.05" fill="#e83a25" stroke="#be2f1e" stroke-width="0.5"/><rect x="1590.6" y="734.49" width="62.2" height="8.01" fill="#ea6638" stroke="#bf532d" stroke-width="0.5"/><rect x="1590.6" y="742.50" width="62.2" height="33.29" fill="#f0a183" stroke="#c4846b" stroke-width="0.5"/><rect x="1590.6" y="775.79" width="62.2" height="18.84" fill="#f7cdbf" stroke="#caa89c" stroke-width="0.5"/><rect x="1590.6" y="794.63" width="62.2" height="7.22" fill="#bb2222" stroke="#991b1b" stroke-width="0.5"/><rect x="1590.6" y="801.85" width="62.2" height="71.29" fill="#d3363d" stroke="#ad2c32" stroke-width="0.5"/><rect x="1590.6" y="873.14" width="62.2" height="54.33" fill="#e07e86" stroke="#b7676d" stroke-width="0.5"/><rect x="1590.6" y="927.47" width="62.2" height="15.70" fill="#1a4252" stroke="#153643" stroke-width="0.5"/><rect x="1590.6" y="943.17" width="62.2" height="19.47" fill="#306c7d" stroke="#275866" stroke-width="0.5"/><rect x="1590.6" y="962.64" width="62.2" height="37.06" fill="#7aa7b3" stroke="#648892" stroke-width="0.5"/><rect x="1590.6" y="999.70" width="62.2" height="20.41" fill="#3f8ef5" stroke="#3374c8" stroke-width="0.5"/><rect x="1590.6" y="1020.11" width="62.2" height="10.05" fill="#97dffb" stroke="#7bb6cd" stroke-width="0.5"/><rect x="1590.6" y="1030.16" width="62.2" height="11.93" fill="#56bcea" stroke="#469abf" stroke-width="0.5"/><text x="1620.6" y="1068.7" text-anchor="middle" font-size="15.6" fill="#454545" textLength="51.8" lengthAdjust="spacingAndGlyphs">08'2022</text><rect x="1744.0" y="699.79" width="62.2" height="32.03" fill="#e83a25" stroke="#be2f1e" stroke-width="0.5"/><rect x="1744.0" y="731.82" width="62.2" height="6.91" fill="#ea6638" stroke="#bf532d" stroke-width="0.5"/><rect x="1744.0" y="738.73" width="62.2" height="37.06" fill="#f0a183" stroke="#c4846b" stroke-width="0.5"/><rect x="1744.0" y="775.79" width="62.2" height="18.84" fill="#f7cdbf" stroke="#caa89c" stroke-width="0.5"/><rect x="1744.0" y="794.63" width="62.2" height="7.22" fill="#bb2222" stroke="#991b1b" stroke-width="0.5"/><rect x="1744.0" y="801.85" width="62.2" height="74.43" fill="#d3363d" stroke="#ad2c32" stroke-width="0.5"/><rect x="1744.0" y="876.28" width="62.2" height="50.25" fill="#e07e86" stroke="#b7676d" stroke-width="0.5"/><rect x="1744.0" y="926.53" width="62.2" height="15.07" fill="#1a4252" stroke="#153643" stroke-width="0.5"/><rect x="1744.0" y="941.60" width="62.2" height="21.35" fill="#306c7d" stroke="#275866" stroke-width="0.5"/><rect x="1744.0" y="962.96" width="62.2" height="38.31" fill="#7aa7b3" stroke="#648892" stroke-width="0.5"/><rect x="1744.0" y="1001.27" width="62.2" height="20.41" fill="#3f8ef5" stroke="#3374c8" stroke-width="0.5"/><rect x="1744.0" y="1021.68" width="62.2" height="10.99" fill="#97dffb" stroke="#7bb6cd" stroke-width="0.5"/><rect x="1744.0" y="1032.67" width="62.2" height="9.42" fill="#56bcea" stroke="#469abf" stroke-width="0.5"/><text x="1773.9" y="1068.7" text-anchor="middle" font-size="15.6" fill="#454545" textLength="51.8" lengthAdjust="spacingAndGlyphs">09'2022</text><rect x="1897.5" y="711.72" width="62.2" height="30.46" fill="#e83a25" stroke="#be2f1e" stroke-width="0.5"/><rect x="1897.5" y="742.18" width="62.2" height="7.85" fill="#ea6638" stroke="#bf532d" stroke-width="0.5"/><rect x="1897.5" y="750.04" width="62.2" height="37.69" fill="#f0a183" stroke="#c4846b" stroke-width="0.5"/><rect x="1897.5" y="787.72" width="62.2" height="16.33" fill="#f7cdbf" stroke="#caa89c" stroke-width="0.5"/><rect x="1897.5" y="804.05" width="62.2" height="4.71" fill="#bb2222" stroke="#991b1b" stroke-width="0.5"/><rect x="1897.5" y="808.76" width="62.2" height="71.60" fill="#d3363d" stroke="#ad2c32" stroke-width="0.5"/><rect x="1897.5" y="880.36" width="62.2" height="58.73" fill="#e07e86" stroke="#b7676d" stroke-width="0.5"/><rect x="1897.5" y="939.09" width="62.2" height="17.27" fill="#1a4252" stroke="#153643" stroke-width="0.5"/><rect x="1897.5" y="956.36" width="62.2" height="18.84" fill="#306c7d" stroke="#275866" stroke-width="0.5"/><rect x="1897.5" y="975.20" width="62.2" height="39.26" fill="#7aa7b3" stroke="#648892" stroke-width="0.5"/><rect x="1897.5" y="1014.46" width="62.2" height="5.65" fill="#3f8ef5" stroke="#3374c8" stroke-width="0.5"/><rect x="1897.5" y="1020.11" width="62.2" height="12.56" fill="#97dffb" stroke="#7bb6cd" stroke-width="0.5"/><rect x="1897.5" y="1032.67" width="62.2" height="9.42" fill="#56bcea" stroke="#469abf" stroke-width="0.5"/><text x="1927.1" y="1068.7" text-anchor="middle" font-size="15.6" fill="#454545" textLength="49.6" lengthAdjust="spacingAndGlyphs">10'2022</text><rect x="2050.9" y="711.72" width="62.2" height="31.40" fill="#e83a25" stroke="#be2f1e" stroke-width="0.5"/><rect x="2050.9" y="743.13" width="62.2" height="4.71" fill="#ea6638" stroke="#bf532d" stroke-width="0.5"/><rect x="2050.9" y="747.84" width="62.2" height="36.11" fill="#f0a183" stroke="#c4846b" stroke-width="0.5"/><rect x="2050.9" y="783.95" width="62.2" height="18.84" fill="#f7cdbf" stroke="#caa89c" stroke-width="0.5"/><rect x="2050.9" y="802.80" width="62.2" height="4.40" fill="#bb2222" stroke="#991b1b" stroke-width="0.5"/><rect x="2050.9" y="807.19" width="62.2" height="76.31" fill="#d3363d" stroke="#ad2c32" stroke-width="0.5"/><rect x="2050.9" y="883.50" width="62.2" height="55.59" fill="#e07e86" stroke="#b7676d" stroke-width="0.5"/><rect x="2050.9" y="939.09" width="62.2" height="16.02" fill="#1a4252" stroke="#153643" stroke-width="0.5"/><rect x="2050.9" y="955.11" width="62.2" height="21.04" fill="#306c7d" stroke="#275866" stroke-width="0.5"/><rect x="2050.9" y="976.15" width="62.2" height="36.11" fill="#7aa7b3" stroke="#648892" stroke-width="0.5"/><rect x="2050.9" y="1012.26" width="62.2" height="5.34" fill="#3f8ef5" stroke="#3374c8" stroke-width="0.5"/><rect x="2050.9" y="1017.60" width="62.2" height="14.13" fill="#97dffb" stroke="#7bb6cd" stroke-width="0.5"/><rect x="2050.9" y="1031.73" width="62.2" height="10.36" fill="#56bcea" stroke="#469abf" stroke-width="0.5"/><text x="2080.4" y="1068.7" text-anchor="middle" font-size="15.6" fill="#454545" textLength="48" lengthAdjust="spacingAndGlyphs">11'2022</text><rect x="2204.3" y="736.22" width="62.2" height="27.32" fill="#e83a25" stroke="#be2f1e" stroke-width="0.5"/><rect x="2204.3" y="763.54" width="62.2" height="8.48" fill="#ea6638" stroke="#bf532d" stroke-width="0.5"/><rect x="2204.3" y="772.02" width="62.2" height="30.46" fill="#f0a183" stroke="#c4846b" stroke-width="0.5"/><rect x="2204.3" y="802.48" width="62.2" height="18.84" fill="#f7cdbf" stroke="#caa89c" stroke-width="0.5"/><rect x="2204.3" y="821.32" width="62.2" height="6.28" fill="#bb2222" stroke="#991b1b" stroke-width="0.5"/><rect x="2204.3" y="827.60" width="62.2" height="73.80" fill="#d3363d" stroke="#ad2c32" stroke-width="0.5"/><rect x="2204.3" y="901.40" width="62.2" height="48.05" fill="#e07e86" stroke="#b7676d" stroke-width="0.5"/><rect x="2204.3" y="949.45" width="62.2" height="13.50" fill="#1a4252" stroke="#153643" stroke-width="0.5"/><rect x="2204.3" y="962.96" width="62.2" height="19.47" fill="#306c7d" stroke="#275866" stroke-width="0.5"/><rect x="2204.3" y="982.43" width="62.2" height="37.69" fill="#7aa7b3" stroke="#648892" stroke-width="0.5"/><rect x="2204.3" y="1020.11" width="62.2" height="4.08" fill="#3f8ef5" stroke="#3374c8" stroke-width="0.5"/><rect x="2204.3" y="1024.19" width="62.2" height="10.05" fill="#97dffb" stroke="#7bb6cd" stroke-width="0.5"/><rect x="2204.3" y="1034.24" width="62.2" height="7.85" fill="#56bcea" stroke="#469abf" stroke-width="0.5"/><text x="2233.7" y="1068.7" text-anchor="middle" font-size="15.6" fill="#454545" textLength="48.7" lengthAdjust="spacingAndGlyphs">12'2022</text><rect x="2357.8" y="722.71" width="62.2" height="28.89" fill="#e83a25" stroke="#be2f1e" stroke-width="0.5"/><rect x="2357.8" y="751.61" width="62.2" height="7.85" fill="#ea6638" stroke="#bf532d" stroke-width="0.5"/><rect x="2357.8" y="759.46" width="62.2" height="32.35" fill="#f0a183" stroke="#c4846b" stroke-width="0.5"/><rect x="2357.8" y="791.80" width="62.2" height="17.90" fill="#f7cdbf" stroke="#caa89c" stroke-width="0.5"/><rect x="2357.8" y="809.70" width="62.2" height="6.91" fill="#bb2222" stroke="#991b1b" stroke-width="0.5"/><rect x="2357.8" y="816.61" width="62.2" height="87.30" fill="#d3363d" stroke="#ad2c32" stroke-width="0.5"/><rect x="2357.8" y="903.92" width="62.2" height="49.62" fill="#e07e86" stroke="#b7676d" stroke-width="0.5"/><rect x="2357.8" y="953.54" width="62.2" height="17.27" fill="#1a4252" stroke="#153643" stroke-width="0.5"/><rect x="2357.8" y="970.81" width="62.2" height="17.27" fill="#306c7d" stroke="#275866" stroke-width="0.5"/><rect x="2357.8" y="988.08" width="62.2" height="30.46" fill="#7aa7b3" stroke="#648892" stroke-width="0.5"/><rect x="2357.8" y="1018.54" width="62.2" height="4.71" fill="#3f8ef5" stroke="#3374c8" stroke-width="0.5"/><rect x="2357.8" y="1023.25" width="62.2" height="11.62" fill="#97dffb" stroke="#7bb6cd" stroke-width="0.5"/><rect x="2357.8" y="1034.87" width="62.2" height="7.22" fill="#56bcea" stroke="#469abf" stroke-width="0.5"/><text x="2386.9" y="1068.7" text-anchor="middle" font-size="15.6" fill="#454545" textLength="49.9" lengthAdjust="spacingAndGlyphs">01'2023</text><rect x="936.5" y="613.4" width="19.5" height="3.7" fill="#56bcea"/><text x="964.2" y="621.8" font-size="18" fill="#454545" textLength="39.5" lengthAdjust="spacingAndGlyphs">AVAL</text><rect x="1012.6" y="613.4" width="19.5" height="3.7" fill="#97dffb"/><text x="1041.0" y="621.8" font-size="18" fill="#454545" textLength="39.5" lengthAdjust="spacingAndGlyphs">RBAL</text><rect x="1089.8" y="613.4" width="19.5" height="3.7" fill="#3f8ef5"/><text x="1118.0" y="621.8" font-size="18" fill="#454545" textLength="42.7" lengthAdjust="spacingAndGlyphs">RBBG</text><rect x="1170.0" y="613.4" width="19.5" height="3.7" fill="#7aa7b3"/><text x="1198.2" y="621.8" font-size="18" fill="#454545" textLength="42.2" lengthAdjust="spacingAndGlyphs">RBBH</text><rect x="1248.6" y="613.4" width="19.5" height="3.7" fill="#306c7d"/><text x="1277.0" y="621.8" font-size="18" fill="#454545" textLength="41.1" lengthAdjust="spacingAndGlyphs">RBCZ</text><rect x="1327.4" y="613.4" width="19.5" height="3.7" fill="#1a4252"/><text x="1355.8" y="621.8" font-size="18" fill="#454545" textLength="41.6" lengthAdjust="spacingAndGlyphs">RBHR</text><rect x="1406.0" y="613.4" width="19.5" height="3.7" fill="#e07e86"/><text x="1434.2" y="621.8" font-size="18" fill="#454545" textLength="43.2" lengthAdjust="spacingAndGlyphs">RBHU</text><rect x="1486.4" y="613.4" width="19.5" height="3.7" fill="#d3363d"/><text x="1514.0" y="621.8" font-size="18" fill="#454545" textLength="25.0" lengthAdjust="spacingAndGlyphs">RBI</text><rect x="1548.1" y="613.4" width="19.5" height="3.7" fill="#bb2222"/><text x="1576.0" y="621.8" font-size="18" fill="#454545" textLength="43.0" lengthAdjust="spacingAndGlyphs">RBKO</text><rect x="1627.6" y="613.4" width="19.5" height="3.7" fill="#f7cdbf"/><text x="1655.6" y="621.8" font-size="18" fill="#454545" textLength="43.6" lengthAdjust="spacingAndGlyphs">RBRO</text><rect x="1707.4" y="613.4" width="19.5" height="3.7" fill="#f0a183"/><text x="1735.4" y="621.8" font-size="18" fill="#454545" textLength="40.3" lengthAdjust="spacingAndGlyphs">RBRS</text><rect x="1783.5" y="613.4" width="19.5" height="3.7" fill="#ea6638"/><text x="1812.0" y="621.8" font-size="18" fill="#454545" textLength="41.5" lengthAdjust="spacingAndGlyphs">RBRU</text><rect x="1863.0" y="613.4" width="19.5" height="3.7" fill="#e83a25"/><text x="1891.0" y="621.8" font-size="18" fill="#454545" textLength="39.9" lengthAdjust="spacingAndGlyphs">TBSK</text></svg>
<div class="r" style="left:385.3px;top:1104.8px;width:1040.0px;height:397.7px;background:#fff;border-radius:4px"></div>
<div class="r" style="left:385.3px;top:1104.8px;width:1040.0px;height:75.2px;background:#f8f8f8;border-radius:4px 4px 0 0"></div>
<div class="t" style="left:412.4px;transform-origin:0 50%;top:1130.2px;font-size:20.7px;line-height:26.91px;font-weight:700;color:#1d1d1f;transform:scaleX(1.0387);-webkit-text-stroke:0.45px #1d1d1f;">Activities</div>
<svg class="r" style="left:838px;top:1118px" width="262" height="49" viewBox="0 0 262 49"><rect x="2.80" y="3.20" width="254.00" height="41.60" rx="20.80" fill="none" stroke="#6e8ae5" stroke-width="1.2"/></svg>
<div class="t" style="left:861.3px;transform-origin:0 50%;top:1133.2px;font-size:15.4px;line-height:20.02px;font-weight:700;color:#3c5fdc;transform:scaleX(1.0123);-webkit-text-stroke:0.35px #3c5fdc;">Search</div>
<svg class="r" style="left:1057.0px;top:1131.3px;" width="22.5" height="22.5" viewBox="0 0 24 24"><path d="M15.5 14h-.79l-.28-.27C15.41 12.59 16 11.11 16 9.5 16 5.91 13.09 3 9.5 3S3 5.91 3 9.5 5.91 16 9.5 16c1.61 0 3.09-.59 4.23-1.57l.27.28v.79l5 4.99L20.49 19l-4.99-5zm-6 0C7.01 14 5 11.99 5 9.5S7.01 5 9.5 5 14 7.01 14 9.5 11.99 14 9.5 14z" fill="#3c5fdc" stroke="#3c5fdc" stroke-width="1.0" stroke-linejoin="round"/></svg>
<svg class="r" style="left:1104px;top:1118px" width="110" height="49" viewBox="0 0 110 49"><rect x="3.00" y="3.20" width="102.00" height="41.60" rx="20.80" fill="none" stroke="#6e8ae5" stroke-width="1.2"/></svg>
<div class="t" style="left:1128.6px;transform-origin:0 50%;top:1132.7px;font-size:15.4px;line-height:20.02px;font-weight:700;color:#3c5fdc;transform:scaleX(0.9921);-webkit-text-stroke:0.35px #3c5fdc;">Add</div>
<svg class="r" style="left:1168px;top:1132px" width="20" height="20" viewBox="0 0 20 20"><path d="M4.30 10.50H16.70M10.50 4.30V16.70" stroke="#3c5fdc" stroke-width="2.0" fill="none"/></svg>
<svg class="r" style="left:1219px;top:1118px" width="128" height="49" viewBox="0 0 128 49"><rect x="2.80" y="3.20" width="119.90" height="41.60" rx="20.80" fill="none" stroke="#6e8ae5" stroke-width="1.2"/></svg>
<div class="t" style="left:1242.8px;transform-origin:0 50%;top:1132.7px;font-size:15.4px;line-height:20.02px;font-weight:700;color:#3c5fdc;transform:scaleX(1.0278);-webkit-text-stroke:0.35px #3c5fdc;">Filters</div>
<svg class="r" style="left:1301.3px;top:1133.0px;" width="19.2" height="19.2" viewBox="0 0 24 24"><path d="M2.5 2.5h19l-7.2 9.3V22l-4.6-3.2v-7z" fill="#3c5fdc"/></svg>
<svg class="r" style="left:1353px;top:1118px" width="49" height="49" viewBox="0 0 49 49"><rect x="3.15" y="3.15" width="41.30" height="41.30" rx="20.65" fill="none" stroke="#bcbcc0" stroke-width="1.1"/></svg><svg class="r" style="left:1372px;top:1132px" width="8" height="20" viewBox="0 0 8 20"><circle cx="4.80" cy="5.65" r="1.85" fill="#222"/><circle cx="4.80" cy="10.40" r="1.85" fill="#222"/><circle cx="4.80" cy="15.15" r="1.85" fill="#222"/></svg>
<div class="t" style="left:418.0px;transform-origin:0 50%;top:1195.2px;font-size:15px;line-height:19.5px;font-weight:700;color:#222;transform:scaleX(1.0933);-webkit-text-stroke:0.3px #222;">Cocunut</div>
<div class="t" style="left:515.6px;transform-origin:0 50%;top:1195.2px;font-size:15px;line-height:19.5px;font-weight:700;color:#222;transform:scaleX(1.1141);-webkit-text-stroke:0.3px #222;">Customer</div>
<div class="t" style="left:661.9px;transform-origin:0 50%;top:1195.2px;font-size:15px;line-height:19.5px;font-weight:700;color:#222;transform:scaleX(1.1595);-webkit-text-stroke:0.3px #222;">Date</div>
<div class="t" style="left:759.2px;transform-origin:0 50%;top:1195.2px;font-size:15px;line-height:19.5px;font-weight:700;color:#222;transform:scaleX(1.1578);-webkit-text-stroke:0.3px #222;">Priority</div>
<div class="t" style="left:856.9px;transform-origin:0 50%;top:1195.2px;font-size:15px;line-height:19.5px;font-weight:700;color:#222;transform:scaleX(1.1746);-webkit-text-stroke:0.3px #222;">Title</div>
<div class="t" style="left:1148.8px;transform-origin:0 50%;top:1195.2px;font-size:15px;line-height:19.5px;font-weight:700;color:#222;transform:scaleX(1.1452);-webkit-text-stroke:0.3px #222;">Status</div>
<div class="t" style="left:1246.4px;transform-origin:0 50%;top:1195.2px;font-size:15px;line-height:19.5px;font-weight:700;color:#222;transform:scaleX(1.1111);-webkit-text-stroke:0.3px #222;">Labels</div>
<div class="r" style="left:407.6px;top:1231px;width:988.1px;height:255.9px;overflow:hidden">
<div class="r" style="left:0;top:0;width:987.1px;height:400px;border:1px solid #f3f3f5;border-radius:6px;box-sizing:border-box"></div>
<div class="t" style="left:11.0px;transform-origin:0 50%;top:18.0px;font-size:14.5px;line-height:18.85px;font-weight:400;color:#2c2c2c;transform:scaleX(0.9424);-webkit-text-stroke:0.45px #2c2c2c;">253</div>
<div class="t" style="left:111.0px;transform-origin:0 50%;top:18.0px;font-size:14.5px;line-height:18.85px;font-weight:400;color:#2c2c2c;transform:scaleX(1.0280);-webkit-text-stroke:0.45px #2c2c2c;">InstCli short 2686</div>
<div class="t" style="left:257.9px;transform-origin:0 50%;top:18.0px;font-size:14.5px;line-height:18.85px;font-weight:400;color:#2c2c2c;transform:scaleX(0.9950);-webkit-text-stroke:0.45px #2c2c2c;">03-07-2023</div>
<div class="t" style="left:357.6px;transform-origin:0 50%;top:18.0px;font-size:14.5px;line-height:18.85px;font-weight:400;color:#2c2c2c;transform:scaleX(0.9188);-webkit-text-stroke:0.45px #2c2c2c;">NORMAL</div>
<svg class="r" style="left:457.4px;top:13.6px;" width="27.0" height="27.0" viewBox="0 0 24 24"><path d="M12 2C6.48 2 2 6.48 2 12s4.48 10 10 10 10-4.48 10-10S17.52 2 12 2zm1.41 16.09V20h-2.67v-1.93c-1.71-.36-3.16-1.46-3.27-3.4h1.96c.1 1.05.82 1.87 2.65 1.87 1.96 0 2.4-.98 2.4-1.59 0-.83-.44-1.61-2.67-2.14-2.48-.6-4.18-1.62-4.18-3.67 0-1.72 1.39-2.84 3.11-3.21V4h2.67v1.95c1.86.45 2.79 1.86 2.85 3.39H14.3c-.05-1.11-.64-1.87-2.22-1.87-1.5 0-2.4.68-2.4 1.64 0 .84.65 1.39 2.67 1.91s4.18 1.39 4.18 3.91c-.01 1.83-1.38 2.83-3.12 3.16z" fill="#2e7585"/></svg>
<div class="t" style="left:495.5px;transform-origin:0 50%;top:18.3px;font-size:14.5px;line-height:18.85px;font-weight:700;color:#2c2c2c;">test01</div>
<div class="t" style="left:741.2px;transform-origin:0 50%;top:18.0px;font-size:14.5px;line-height:18.85px;font-weight:400;color:#2c2c2c;transform:scaleX(0.9952);-webkit-text-stroke:0.45px #2c2c2c;">Open</div>
<div class="t" style="left:841.2px;transform-origin:0 50%;top:18.0px;font-size:14.5px;line-height:18.85px;font-weight:400;color:#2c2c2c;transform:scaleX(1.0091);-webkit-text-stroke:0.45px #2c2c2c;">AML Call/Minor de...</div>
<div class="r" style="left:0.0px;top:53.0px;width:988.1px;height:1.0px;background:#f3f3f5;"></div>
<div class="t" style="left:11.0px;transform-origin:0 50%;top:72.1px;font-size:14.5px;line-height:18.85px;font-weight:400;color:#2c2c2c;transform:scaleX(0.9424);-webkit-text-stroke:0.45px #2c2c2c;">253</div>
<div class="t" style="left:111.0px;transform-origin:0 50%;top:72.1px;font-size:14.5px;line-height:18.85px;font-weight:400;color:#2c2c2c;transform:scaleX(1.0280);-webkit-text-stroke:0.45px #2c2c2c;">InstCli short 2686</div>
<div class="t" style="left:257.9px;transform-origin:0 50%;top:72.1px;font-size:14.5px;line-height:18.85px;font-weight:400;color:#2c2c2c;transform:scaleX(0.9950);-webkit-text-stroke:0.45px #2c2c2c;">30-06-2023</div>
<svg class="r" style="left:457.4px;top:67.7px;" width="27.0" height="27.0" viewBox="0 0 24 24"><path d="M12 2C6.48 2 2 6.48 2 12s4.48 10 10 10 10-4.48 10-10S17.52 2 12 2zm1.41 16.09V20h-2.67v-1.93c-1.71-.36-3.16-1.46-3.27-3.4h1.96c.1 1.05.82 1.87 2.65 1.87 1.96 0 2.4-.98 2.4-1.59 0-.83-.44-1.61-2.67-2.14-2.48-.6-4.18-1.62-4.18-3.67 0-1.72 1.39-2.84 3.11-3.21V4h2.67v1.95c1.86.45 2.79 1.86 2.85 3.39H14.3c-.05-1.11-.64-1.87-2.22-1.87-1.5 0-2.4.68-2.4 1.64 0 .84.65 1.39 2.67 1.91s4.18 1.39 4.18 3.91c-.01 1.83-1.38 2.83-3.12 3.16z" fill="#7b2020"/></svg>
<div class="t" style="left:495.5px;transform-origin:0 50%;top:72.4px;font-size:14.5px;line-height:18.85px;font-weight:700;color:#2c2c2c;transform:scaleX(1.0699);">frrtyuio</div>
<div class="t" style="left:741.2px;transform-origin:0 50%;top:72.1px;font-size:14.5px;line-height:18.85px;font-weight:400;color:#2c2c2c;transform:scaleX(1.0879);-webkit-text-stroke:0.45px #2c2c2c;">Initial stage</div>
<div class="r" style="left:0.0px;top:107.0px;width:988.1px;height:1.0px;background:#f3f3f5;"></div>
<div class="t" style="left:11.0px;transform-origin:0 50%;top:126.1px;font-size:14.5px;line-height:18.85px;font-weight:400;color:#2c2c2c;transform:scaleX(0.9424);-webkit-text-stroke:0.45px #2c2c2c;">253</div>
<div class="t" style="left:111.0px;transform-origin:0 50%;top:126.1px;font-size:14.5px;line-height:18.85px;font-weight:400;color:#2c2c2c;transform:scaleX(1.0280);-webkit-text-stroke:0.45px #2c2c2c;">InstCli short 2686</div>
<div class="t" style="left:257.9px;transform-origin:0 50%;top:126.1px;font-size:14.5px;line-height:18.85px;font-weight:400;color:#2c2c2c;transform:scaleX(0.9950);-webkit-text-stroke:0.45px #2c2c2c;">28-06-2023</div>
<div class="t" style="left:357.6px;transform-origin:0 50%;top:126.1px;font-size:14.5px;line-height:18.85px;font-weight:400;color:#2c2c2c;transform:scaleX(0.9188);-webkit-text-stroke:0.45px #2c2c2c;">NORMAL</div>
<svg class="r" style="left:457.4px;top:121.8px;" width="27.0" height="27.0" viewBox="0 0 24 24"><path d="M12 2C6.48 2 2 6.48 2 12s4.48 10 10 10 10-4.48 10-10S17.52 2 12 2zm1.41 16.09V20h-2.67v-1.93c-1.71-.36-3.16-1.46-3.27-3.4h1.96c.1 1.05.82 1.87 2.65 1.87 1.96 0 2.4-.98 2.4-1.59 0-.83-.44-1.61-2.67-2.14-2.48-.6-4.18-1.62-4.18-3.67 0-1.72 1.39-2.84 3.11-3.21V4h2.67v1.95c1.86.45 2.79 1.86 2.85 3.39H14.3c-.05-1.11-.64-1.87-2.22-1.87-1.5 0-2.4.68-2.4 1.64 0 .84.65 1.39 2.67 1.91s4.18 1.39 4.18 3.91c-.01 1.83-1.38 2.83-3.12 3.16z" fill="#2e7585"/></svg>
<div class="t" style="left:495.5px;transform-origin:0 50%;top:126.4px;font-size:14.5px;line-height:18.85px;font-weight:700;color:#2c2c2c;transform:scaleX(0.9620);">AO UX Test</div>
<div class="t" style="left:741.2px;transform-origin:0 50%;top:126.1px;font-size:14.5px;line-height:18.85px;font-weight:400;color:#2c2c2c;transform:scaleX(0.9952);-webkit-text-stroke:0.45px #2c2c2c;">Open</div>
<div class="t" style="left:841.2px;transform-origin:0 50%;top:126.1px;font-size:14.5px;line-height:18.85px;font-weight:400;color:#2c2c2c;transform:scaleX(1.0091);-webkit-text-stroke:0.45px #2c2c2c;">AML Call/Major de...</div>
<div class="r" style="left:0.0px;top:162.0px;width:988.1px;height:1.0px;background:#f3f3f5;"></div>
<div class="t" style="left:11.0px;transform-origin:0 50%;top:180.2px;font-size:14.5px;line-height:18.85px;font-weight:400;color:#2c2c2c;transform:scaleX(0.9424);-webkit-text-stroke:0.45px #2c2c2c;">253</div>
<div class="t" style="left:111.0px;transform-origin:0 50%;top:180.2px;font-size:14.5px;line-height:18.85px;font-weight:400;color:#2c2c2c;transform:scaleX(1.0280);-webkit-text-stroke:0.45px #2c2c2c;">InstCli short 2686</div>
<div class="t" style="left:257.9px;transform-origin:0 50%;top:180.2px;font-size:14.5px;line-height:18.85px;font-weight:400;color:#2c2c2c;transform:scaleX(0.9950);-webkit-text-stroke:0.45px #2c2c2c;">28-06-2023</div>
<div class="t" style="left:357.6px;transform-origin:0 50%;top:180.2px;font-size:14.5px;line-height:18.85px;font-weight:400;color:#2c2c2c;transform:scaleX(0.9188);-webkit-text-stroke:0.45px #2c2c2c;">NORMAL</div>
<svg class="r" style="left:457.4px;top:175.8px;" width="27.0" height="27.0" viewBox="0 0 24 24"><path d="M12 2C6.48 2 2 6.48 2 12s4.48 10 10 10 10-4.48 10-10S17.52 2 12 2zm1.41 16.09V20h-2.67v-1.93c-1.71-.36-3.16-1.46-3.27-3.4h1.96c.1 1.05.82 1.87 2.65 1.87 1.96 0 2.4-.98 2.4-1.59 0-.83-.44-1.61-2.67-2.14-2.48-.6-4.18-1.62-4.18-3.67 0-1.72 1.39-2.84 3.11-3.21V4h2.67v1.95c1.86.45 2.79 1.86 2.85 3.39H14.3c-.05-1.11-.64-1.87-2.22-1.87-1.5 0-2.4.68-2.4 1.64 0 .84.65 1.39 2.67 1.91s4.18 1.39 4.18 3.91c-.01 1.83-1.38 2.83-3.12 3.16z" fill="#2e7585"/></svg>
<div class="t" style="left:495.5px;transform-origin:0 50%;top:180.5px;font-size:14.5px;line-height:18.85px;font-weight:700;color:#2c2c2c;transform:scaleX(1.0314);">test aO</div>
<div class="t" style="left:741.2px;transform-origin:0 50%;top:180.2px;font-size:14.5px;line-height:18.85px;font-weight:400;color:#2c2c2c;transform:scaleX(0.9952);-webkit-text-stroke:0.45px #2c2c2c;">Open</div>
<div class="t" style="left:841.2px;transform-origin:0 50%;top:180.2px;font-size:14.5px;line-height:18.85px;font-weight:400;color:#2c2c2c;transform:scaleX(0.9920);-webkit-text-stroke:0.45px #2c2c2c;">a</div>
<div class="r" style="left:0.0px;top:215.0px;width:988.1px;height:1.0px;background:#f3f3f5;"></div>
<div class="t" style="left:11.0px;transform-origin:0 50%;top:234.3px;font-size:14.5px;line-height:18.85px;font-weight:400;color:#2c2c2c;transform:scaleX(0.9424);-webkit-text-stroke:0.45px #2c2c2c;">253</div>
<div class="t" style="left:111.0px;transform-origin:0 50%;top:234.3px;font-size:14.5px;line-height:18.85px;font-weight:400;color:#2c2c2c;transform:scaleX(1.0280);-webkit-text-stroke:0.45px #2c2c2c;">InstCli short 2686</div>
<div class="t" style="left:257.9px;transform-origin:0 50%;top:234.3px;font-size:14.5px;line-height:18.85px;font-weight:400;color:#2c2c2c;transform:scaleX(0.9950);-webkit-text-stroke:0.45px #2c2c2c;">28-06-2023</div>
<svg class="r" style="left:458.4px;top:230.7px;" width="25.0" height="25.0" viewBox="0 0 24 24"><path d="M17 12h-5v5h5v-5zM16 1v2H8V1H6v2H5c-1.11 0-1.99.9-1.99 2L3 19c0 1.1.89 2 2 2h14c1.1 0 2-.9 2-2V5c0-1.1-.9-2-2-2h-1V1h-2zm3 18H5V8h14v11z" fill="#2c4fa3"/></svg>
<div class="t" style="left:495.5px;transform-origin:0 50%;top:234.6px;font-size:14.5px;line-height:18.85px;font-weight:700;color:#2c2c2c;">test AO UX flow</div>
<div class="t" style="left:741.2px;transform-origin:0 50%;top:234.3px;font-size:14.5px;line-height:18.85px;font-weight:400;color:#2c2c2c;transform:scaleX(1.0147);-webkit-text-stroke:0.45px #2c2c2c;">Planned</div>
<div class="t" style="left:841.2px;transform-origin:0 50%;top:234.3px;font-size:14.5px;line-height:18.85px;font-weight:400;color:#2c2c2c;transform:scaleX(0.9920);-webkit-text-stroke:0.45px #2c2c2c;">a</div>
</div>
<div class="r" style="left:1407.0px;top:1231.0px;width:8.0px;height:255.5px;background:#ececef;border-radius:4px"></div>
<div class="r" style="left:1407.3px;top:1231.0px;width:7.4px;height:22.7px;background:#a6a6aa;border-radius:4px"></div>
<div class="r" style="left:1448.9px;top:1104.8px;width:1039.1px;height:397.7px;background:#fff;border-radius:4px"></div>
<div class="r" style="left:1448.9px;top:1104.8px;width:1039.1px;height:75.2px;background:#f8f8f8;border-radius:4px 4px 0 0"></div>
<div class="t" style="left:1476.0px;transform-origin:0 50%;top:1130.2px;font-size:20.7px;line-height:26.91px;font-weight:700;color:#1d1d1f;transform:scaleX(1.0323);-webkit-text-stroke:0.45px #1d1d1f;">Contact persons</div>
<svg class="r" style="left:2015px;top:1118px" width="262" height="49" viewBox="0 0 262 49"><rect x="2.60" y="3.20" width="254.80" height="41.60" rx="20.80" fill="none" stroke="#6e8ae5" stroke-width="1.2"/></svg>
<div class="t" style="left:2039.4px;transform-origin:0 50%;top:1133.2px;font-size:15.4px;line-height:20.02px;font-weight:700;color:#3c5fdc;transform:scaleX(1.0123);-webkit-text-stroke:0.35px #3c5fdc;">Search</div>
<svg class="r" style="left:2234.3px;top:1131.3px;" width="22.5" height="22.5" viewBox="0 0 24 24"><path d="M15.5 14h-.79l-.28-.27C15.41 12.59 16 11.11 16 9.5 16 5.91 13.09 3 9.5 3S3 5.91 3 9.5 5.91 16 9.5 16c1.61 0 3.09-.59 4.23-1.57l.27.28v.79l5 4.99L20.49 19l-4.99-5zm-6 0C7.01 14 5 11.99 5 9.5S7.01 5 9.5 5 14 7.01 14 9.5 11.99 14 9.5 14z" fill="#3c5fdc" stroke="#3c5fdc" stroke-width="1.0" stroke-linejoin="round"/></svg>
<svg class="r" style="left:2282px;top:1118px" width="128" height="49" viewBox="0 0 128 49"><rect x="2.60" y="3.20" width="120.60" height="41.60" rx="20.80" fill="none" stroke="#6e8ae5" stroke-width="1.2"/></svg>
<div class="t" style="left:2306.4px;transform-origin:0 50%;top:1132.7px;font-size:15.4px;line-height:20.02px;font-weight:700;color:#3c5fdc;transform:scaleX(1.0170);-webkit-text-stroke:0.35px #3c5fdc;">Filters</div>
<svg class="r" style="left:2364.5px;top:1133.0px;" width="19.2" height="19.2" viewBox="0 0 24 24"><path d="M2.5 2.5h19l-7.2 9.3V22l-4.6-3.2v-7z" fill="#3c5fdc"/></svg>
<svg class="r" style="left:2417px;top:1118px" width="49" height="49" viewBox="0 0 49 49"><rect x="2.55" y="3.15" width="41.30" height="41.30" rx="20.65" fill="none" stroke="#bcbcc0" stroke-width="1.1"/></svg><svg class="r" style="left:2436px;top:1132px" width="8" height="20" viewBox="0 0 8 20"><circle cx="4.20" cy="5.65" r="1.85" fill="#222"/><circle cx="4.20" cy="10.40" r="1.85" fill="#222"/><circle cx="4.20" cy="15.15" r="1.85" fill="#222"/></svg>
<div class="r" style="left:1470px;top:1205.4px;width:985px;height:271px;overflow:hidden">
<div class="r" style="left:6.2px;top:-105.4px;width:967.6px;height:140.6px;background:#fff;border:1px solid #eaeaed;border-right:3.4px solid #e4e4e8;border-radius:5px;box-sizing:border-box"></div>
<div class="t" style="left:28.5px;transform-origin:0 50%;top:-13.1px;font-size:18px;line-height:23.4px;font-weight:700;color:#222;transform:scaleX(0.9421);">Bruce Lee</div>
<div class="r" style="left:6.2px;top:62.6px;width:967.6px;height:199.0px;background:#fff;border:1px solid #eaeaed;border-right:3.4px solid #e4e4e8;border-radius:5px;box-sizing:border-box"></div>
<div class="t" style="left:28.0px;transform-origin:0 50%;top:78.8px;font-size:15px;line-height:19.5px;font-weight:400;color:#9a9a9c;transform:scaleX(1.0353);-webkit-text-stroke:0.3px #9a9a9c;">Cocunut : 253</div>
<div class="t" style="left:28.0px;transform-origin:0 50%;top:108.5px;font-size:18px;line-height:23.4px;font-weight:700;color:#222;transform:scaleX(1.0420);">Institutional Client 1265 this is a very very very very looooong name</div>
<div class="t" style="left:28.0px;transform-origin:0 50%;top:140.2px;font-size:18px;line-height:23.4px;font-weight:400;color:#222;transform:scaleX(1.0492);-webkit-text-stroke:0.6px #222;">Dama Dama</div>
<div class="t" style="left:28.0px;transform-origin:0 50%;top:176.4px;font-size:15px;line-height:19.5px;font-weight:400;color:#9a9a9c;transform:scaleX(1.1181);-webkit-text-stroke:0.3px #9a9a9c;">Analyst</div>
<div class="r" style="left:28.5px;top:209.2px;width:929.0px;height:1.0px;background:#e9e9eb;"></div>
<svg class="r" style="left:27.3px;top:220.4px;" width="25.0" height="25.0" viewBox="0 0 24 24"><path d="M20 4H4c-1.1 0-1.99.9-1.99 2L2 18c0 1.1.9 2 2 2h16c1.1 0 2-.9 2-2V6c0-1.1-.9-2-2-2zm0 4l-8 5-8-5V6l8 5 8-5v2z" fill="#1c1c1c"/></svg>
<div class="t" style="left:62.7px;transform-origin:0 50%;top:223.8px;font-size:16px;line-height:20.8px;font-weight:400;color:#2a2a2a;">ewelina.kulesza@rbinternational.com.pl</div>
</div>
<div class="r" style="left:2470.4px;top:1207.0px;width:7.3px;height:268.0px;background:#ececef;border-radius:4px"></div>
<div class="r" style="left:2470.6px;top:1239.0px;width:6.9px;height:24.4px;background:#a6a6aa;border-radius:4px"></div>
</div>
</body></html>
